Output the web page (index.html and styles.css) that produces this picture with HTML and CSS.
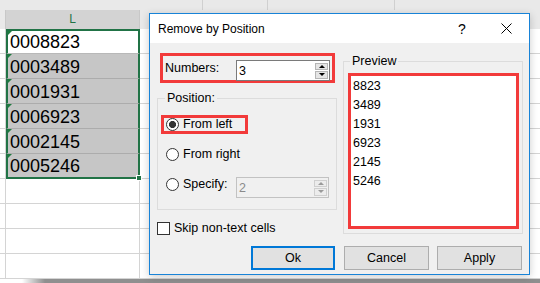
FILE: index.html
```html
<!DOCTYPE html>
<html lang="en">
<head>
    <meta charset="UTF-8">
    <title>Remove by Position</title>
    <link rel="stylesheet" href="styles.css">
</head>
<body>
    <div class="sheet">
        <div class="strip"></div>
        <div class="colhead">
            <div class="hk"></div>
            <div class="hl">L</div>
            <div class="hm"></div>
        </div>
        <div class="grid">
            <div class="sel">
                <div class="cell active">0008823</div>
                <div class="cell">0003489</div>
                <div class="cell">0001931</div>
                <div class="cell">0006923</div>
                <div class="cell">0002145</div>
                <div class="cell last">0005246</div>
            </div>
        </div>
        <div class="shadow"></div>
    </div>

    <div class="dialog">
        <div class="titlebar">
            <span class="title">Remove by Position</span>
            <span class="tb-btn help">?</span>
            <span class="tb-btn close">
                <svg width="11" height="11" viewBox="0 0 11 11"><path d="M0.5 0.5 L10.5 10.5 M10.5 0.5 L0.5 10.5" stroke="#000" stroke-width="1" fill="none"/></svg>
            </span>
        </div>

        <div class="body">
            <div class="left">
                <div class="numbers mark">
                    <span class="num-label">Numbers:</span>
                    <div class="spin-input">
                        <span class="val">3</span>
                        <div class="spinner">
                            <span class="sp up"></span>
                            <span class="sp down"></span>
                        </div>
                    </div>
                </div>

                <fieldset class="group position">
                    <legend>Position:</legend>
                    <div class="opt first mark">
                        <span class="radio on"></span>
                        <span class="opt-label">From left</span>
                    </div>
                    <div class="opt second">
                        <span class="radio"></span>
                        <span class="opt-label">From right</span>
                    </div>
                    <div class="opt third">
                        <span class="radio"></span>
                        <span class="opt-label spec">Specify:</span>
                        <div class="spin-input disabled">
                            <span class="val">2</span>
                            <div class="spinner">
                                <span class="sp up"></span>
                                <span class="sp down"></span>
                            </div>
                        </div>
                    </div>
                </fieldset>

                <div class="check-row">
                    <span class="checkbox"></span>
                    <span class="opt-label">Skip non-text cells</span>
                </div>
            </div>

            <div class="right">
                <fieldset class="group preview">
                    <legend>Preview</legend>
                    <div class="list mark">
                        <div>8823</div>
                        <div>3489</div>
                        <div>1931</div>
                        <div>6923</div>
                        <div>2145</div>
                        <div>5246</div>
                    </div>
                </fieldset>
            </div>

            <div class="footer">
                <span class="btn ok">Ok</span>
                <span class="btn cancel">Cancel</span>
                <span class="btn apply">Apply</span>
            </div>
        </div>
    </div>
</body>
</html>
```

FILE: styles.css
```css
body {
    margin: 0;
    width: 540px;
    height: 283px;
    overflow: hidden;
    position: relative;
    background: #fff;
    font-family: "Liberation Sans", Arial, sans-serif;
    color: #000;
}

/* spreadsheet behind the dialog */
.strip {
    height: 10px;
    background:
        linear-gradient(to right, transparent 202px, #d0d0d0 202px 203px, transparent 203px 267px, #d0d0d0 267px 268px, transparent 268px 394px, #d0d0d0 394px 395px, transparent 395px),
        #e9e9e9;
}
.colhead {
    display: grid;
    grid-template-columns: 6px 134px 1fr;
    height: 19px;
    background: #e9e9e9;
}
.hk {
    border-right: 1px solid #c8c8c8;
}
.hl {
    background: #d3d3d3;
    color: #217346;
    font-size: 12px;
    line-height: 19px;
    text-align: center;
    border-right: 1px solid #c8c8c8;
}
.grid {
    display: grid;
    grid-template-columns: 6px 134px 1fr;
    grid-auto-rows: 25px;
    height: 250px;
    background:
        linear-gradient(to right, transparent 5px, #d4d4d4 5px 6px, transparent 6px 139px, #d4d4d4 139px 140px, transparent 140px),
        repeating-linear-gradient(to bottom, transparent 0 24px, #d4d4d4 24px 25px);
}
.sel {
    grid-column: 2;
    grid-row: 1 / span 6;
    position: relative;
}
.sel::after {
    content: "";
    position: absolute;
    right: -2px;
    bottom: -2px;
    width: 4px;
    height: 4px;
    background: #217346;
    border: 1px solid #fff;
}
.cell {
    position: relative;
    height: 25px;
    box-sizing: border-box;
    padding: 3px 0 0 2px;
    line-height: 21px;
    font-size: 18px;
    background: #c6c6c6;
    border-left: 2px solid #217346;
    border-right: 2px solid #217346;
    border-bottom: 1px solid #acacac;
}
.cell.active {
    background: #fff;
    border-top: 2px solid #217346;
    padding-top: 1px;
    border-bottom-color: #b8b8b8;
}
.cell.last {
    border-bottom: 2px solid #217346;
    padding-top: 2px;
}
.cell::before {
    content: "";
    position: absolute;
    left: 0;
    top: 0;
    border-style: solid;
    border-width: 4px 4px 0 0;
    border-color: #1f7a3f transparent transparent transparent;
}
.cell.active::before {
    top: 0;
}
.shadow {
    height: 4px;
    background: linear-gradient(to right, #fff 22px, #8f8f8f 45px);
}

/* dialog window */
.dialog {
    position: absolute;
    left: 149px;
    top: 13px;
    width: 381px;
    height: 262px;
    box-sizing: border-box;
    border: 1px solid #1883d7;
    background: #f0f0f0;
    box-shadow: 0 2px 8px rgba(0,0,0,0.2);
    font-size: 12.5px;
}
.titlebar {
    display: flex;
    align-items: center;
    height: 29px;
    background: #fff;
    padding-left: 8px;
}
.title {
    flex: 1;
    font-size: 12px;
}
.tb-btn {
    display: flex;
    align-items: center;
    justify-content: center;
    height: 29px;
}
.help {
    width: 44px;
    font-size: 14px;
}
.close {
    width: 45px;
}
.body {
    display: grid;
    grid-template-columns: 180px 180px;
    column-gap: 6px;
    row-gap: 10px;
    padding: 10px 6px 0 7px;
}
.mark {
    border: 3px solid #f23a3a;
    box-sizing: border-box;
}
.numbers {
    display: flex;
    align-items: flex-start;
    width: 175px;
    height: 30px;
    margin-left: 3px;
}
.num-label {
    width: 71px;
    padding-left: 2px;
    line-height: 24px;
}
.spin-input {
    display: flex;
    align-items: center;
    width: 94px;
    height: 21px;
    margin-top: 4px;
    box-sizing: border-box;
    border: 1px solid #7a7a7a;
    background: #fff;
}
.spin-input .val {
    flex: 1;
    padding-left: 2px;
}
.spinner {
    display: flex;
    flex-direction: column;
    width: 13px;
    height: 16px;
    margin-right: 1px;
    gap: 1px;
}
.sp {
    flex: 1;
    display: flex;
    align-items: center;
    justify-content: center;
    background: #e5e5e5;
    border: 1px solid #b5b5b5;
}
.sp::after {
    content: "";
    border-left: 3px solid transparent;
    border-right: 3px solid transparent;
}
.up::after {
    border-bottom: 3px solid #000;
}
.down::after {
    border-top: 3px solid #000;
}
.spin-input.disabled {
    width: 93px;
    margin-top: 0;
    border-color: #c2c2c2;
    background: #f0f0f0;
    color: #8a8a8a;
}
.disabled .sp {
    background: #ececec;
    border-color: #cfcfcf;
}
.disabled .up::after {
    border-bottom-color: #9a9a9a;
}
.disabled .down::after {
    border-top-color: #9a9a9a;
}

.group {
    margin: 0;
    width: 180px;
    box-sizing: border-box;
    border: 1px solid #dcdcdc;
    min-width: 0;
}
.group legend {
    padding: 0 2px;
    line-height: 16px;
}
.position {
    margin-top: 7px;
    padding: 0 4px 11px 3px;
}
.position legend {
    margin-left: 4px;
}
.preview {
    padding: 4px 3px 4px 4px;
}
.preview legend {
    margin-left: 2px;
}
.opt {
    display: flex;
    align-items: center;
}
.opt.first {
    width: 87px;
    height: 19px;
    margin-top: 9px;
    padding-left: 2px;
}
.opt.second {
    height: 20px;
    margin-top: 10px;
    padding-left: 5px;
}
.opt.third {
    height: 21px;
    margin-top: 13px;
    padding-left: 5px;
    align-items: flex-start;
}
.third .radio {
    margin-top: 1px;
}
.opt-label {
    margin-left: 4px;
    line-height: 15px;
}
.spec {
    width: 53px;
}
.radio {
    width: 13px;
    height: 13px;
    flex: none;
    box-sizing: border-box;
    border: 1px solid #333;
    border-radius: 50%;
    background: #fff;
}
.radio.on {
    background: radial-gradient(circle, #333 0 3.3px, #fff 3.8px);
}
.check-row {
    display: flex;
    align-items: center;
    margin-top: 11px;
}
.checkbox {
    width: 13px;
    height: 13px;
    box-sizing: border-box;
    border: 1px solid #333;
    background: #fff;
}
.list {
    height: 156px;
    background: #fff;
    padding: 1px 0 0 2px;
    line-height: 19px;
}

.footer {
    grid-column: 1 / -1;
    display: flex;
    justify-content: flex-end;
    padding-right: 1px;
}
.btn {
    display: flex;
    align-items: center;
    justify-content: center;
    width: 85px;
    height: 24px;
    box-sizing: border-box;
    background: #e1e1e1;
    border: 1px solid #adadad;
}
.btn.ok {
    width: 84px;
    border: 2px solid #0078d7;
    margin-right: 9px;
}
.btn.cancel {
    margin-right: 8px;
}
```
